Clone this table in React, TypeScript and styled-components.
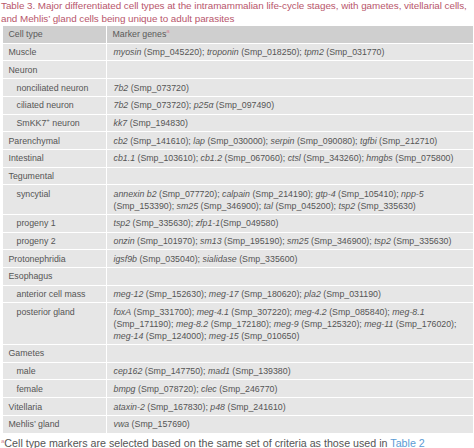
import React from "react";
import styled, { createGlobalStyle } from "styled-components";

const GlobalStyle = createGlobalStyle`
  html, body { margin: 0; padding: 0; background: #ffffff; }
  body { font-family: "Liberation Sans", Arial, Helvetica, sans-serif; }
`;

const Page = styled.div`
  width: 474px;
  box-sizing: border-box;
  padding: 0 0 0 1px;
  overflow: hidden;
`;

const Caption = styled.div`
  color: #b8566b;
  font-size: 9.85px;
  letter-spacing: -0.04px;
  line-height: 12.5px;
  white-space: nowrap;
`;

const CaptionLine = styled.span`
  display: block;
`;

const Table = styled.table`
  width: 472px;
  margin-left: 0.5px;
  border-collapse: separate;
  border-spacing: 1.5px;
  table-layout: fixed;
  font-size: 8.8px;
  line-height: 12px;
  color: #555555;
`;

const HeadCell = styled.th`
  background: #cfcfcf;
  font-weight: normal;
  text-align: left;
  padding: 2.4px 6px;
  color: #5a5a5a;
`;

const TypeCell = styled.td<{ $indent?: boolean }>`
  background: #e6e6e6;
  padding: 2.35px 4px 2.35px ${(p) => (p.$indent ? 14 : 6)}px;
  vertical-align: top;
  white-space: nowrap;
`;

const GeneCell = styled.td`
  background: #e6e6e6;
  padding: 2.35px 6px 2.35px 7px;
  vertical-align: top;
`;

const Gene = styled.i`
  font-style: italic;
`;

const Sup = styled.sup`
  font-size: 6px;
  line-height: 0;
  vertical-align: 4px;
`;

const PinkSup = styled(Sup)`
  color: #d48a98;
`;

const Footnote = styled.div`
  margin-top: 3px;
  font-size: 10.7px;
  line-height: 12px;
  color: #555555;
  white-space: nowrap;
`;

const Link = styled.span`
  color: #5b9bd5;
`;

type Row = { type: React.ReactNode; genes: string; indent?: boolean };

const rows: Row[] = [
  { type: "Muscle", genes: "*myosin* (Smp_045220); *troponin* (Smp_018250); *tpm2* (Smp_031770)" },
  { type: "Neuron", genes: "" },
  { type: "nonciliated neuron", indent: true, genes: "*7b2* (Smp_073720)" },
  { type: "ciliated neuron", indent: true, genes: "*7b2* (Smp_073720); *p25α* (Smp_097490)" },
  {
    type: (
      <>
        SmKK7<Sup>+</Sup> neuron
      </>
    ),
    indent: true,
    genes: "*kk7* (Smp_194830)",
  },
  { type: "Parenchymal", genes: "*cb2* (Smp_141610); *lap* (Smp_030000); *serpin* (Smp_090080); *tgfbi* (Smp_212710)" },
  { type: "Intestinal", genes: "*cb1.1* (Smp_103610); *cb1.2* (Smp_067060); *ctsl* (Smp_343260); *hmgbs* (Smp_075800)" },
  { type: "Tegumental", genes: "" },
  {
    type: "syncytial",
    indent: true,
    genes:
      "*annexin b2* (Smp_077720); *calpain* (Smp_214190); *gtp-4* (Smp_105410); *npp-5* (Smp_153390); *sm25* (Smp_346900); *tal* (Smp_045200); *tsp2* (Smp_335630)",
  },
  { type: "progeny 1", indent: true, genes: "*tsp2* (Smp_335630); *zfp1-1*(Smp_049580)" },
  { type: "progeny 2", indent: true, genes: "*onzin* (Smp_101970); *sm13* (Smp_195190); *sm25* (Smp_346900); *tsp2* (Smp_335630)" },
  { type: "Protonephridia", genes: "*igsf9b* (Smp_035040); *sialidase* (Smp_335600)" },
  { type: "Esophagus", genes: "" },
  { type: "anterior cell mass", indent: true, genes: "*meg-12* (Smp_152630); *meg-17* (Smp_180620); *pla2* (Smp_031190)" },
  {
    type: "posterior gland",
    indent: true,
    genes:
      "*foxA* (Smp_331700); *meg-4.1* (Smp_307220); *meg-4.2* (Smp_085840); *meg-8.1* (Smp_171190); *meg-8.2* (Smp_172180); *meg-9* (Smp_125320); *meg-11* (Smp_176020); *meg-14* (Smp_124000); *meg-15* (Smp_010650)",
  },
  { type: "Gametes", genes: "" },
  { type: "male", indent: true, genes: "*cep162* (Smp_147750); *mad1* (Smp_139380)" },
  { type: "female", indent: true, genes: "*bmpg* (Smp_078720); *clec* (Smp_246770)" },
  { type: "Vitellaria", genes: "*ataxin-2* (Smp_167830); *p48* (Smp_241610)" },
  { type: "Mehlis’ gland", genes: "*vwa* (Smp_157690)" },
];

function renderGenes(text: string) {
  if (!text) return "\u00a0";
  return text.split("*").map((part, i) =>
    i % 2 === 1 ? <Gene key={i}>{part}</Gene> : <React.Fragment key={i}>{part}</React.Fragment>
  );
}

export default function App() {
  return (
    <Page>
      <GlobalStyle />
      <Caption>
        <CaptionLine>
          Table 3. Major differentiated cell types at the intramammalian life-cycle stages, with gametes, vitellarial cells,
        </CaptionLine>
        <CaptionLine>and Mehlis’ gland cells being unique to adult parasites</CaptionLine>
      </Caption>
      <Table>
        <colgroup>
          <col style={{ width: 103 }} />
          <col />
        </colgroup>
        <thead>
          <tr>
            <HeadCell>Cell type</HeadCell>
            <HeadCell>
              Marker genes<PinkSup>a</PinkSup>
            </HeadCell>
          </tr>
        </thead>
        <tbody>
          {rows.map((r, i) => (
            <tr key={i}>
              <TypeCell $indent={r.indent}>{r.type}</TypeCell>
              <GeneCell>{renderGenes(r.genes)}</GeneCell>
            </tr>
          ))}
        </tbody>
      </Table>
      <Footnote>
        <PinkSup>a</PinkSup>Cell type markers are selected based on the same set of criteria as those used in{" "}
        <Link>Table 2</Link>
      </Footnote>
    </Page>
  );
}
